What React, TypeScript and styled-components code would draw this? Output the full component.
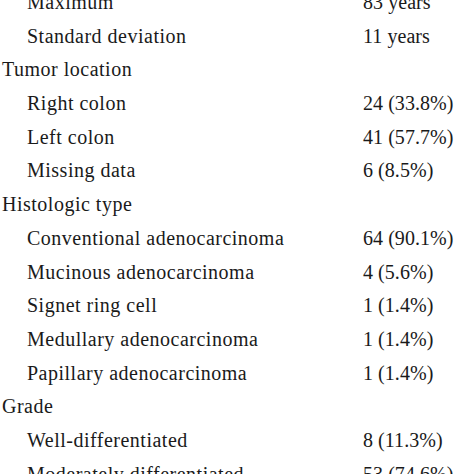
import React from 'react'
import styled, { createGlobalStyle } from 'styled-components'

const GlobalStyle = createGlobalStyle`
    html, body {
        margin: 0;
        padding: 0;
        background: #fff;
        overflow: hidden;
    }
`

type Row = { label: string; value?: string; sub?: boolean }

const rows: Row[] = [
    { label: 'Maximum', value: '83 years', sub: true },
    { label: 'Standard deviation', value: '11 years', sub: true },
    { label: 'Tumor location' },
    { label: 'Right colon', value: '24 (33.8%)', sub: true },
    { label: 'Left colon', value: '41 (57.7%)', sub: true },
    { label: 'Missing data', value: '6 (8.5%)', sub: true },
    { label: 'Histologic type' },
    { label: 'Conventional adenocarcinoma', value: '64 (90.1%)', sub: true },
    { label: 'Mucinous adenocarcinoma', value: '4 (5.6%)', sub: true },
    { label: 'Signet ring cell', value: '1 (1.4%)', sub: true },
    { label: 'Medullary adenocarcinoma', value: '1 (1.4%)', sub: true },
    { label: 'Papillary adenocarcinoma', value: '1 (1.4%)', sub: true },
    { label: 'Grade' },
    { label: 'Well-differentiated', value: '8 (11.3%)', sub: true },
    { label: 'Moderately differentiated', value: '53 (74.6%)', sub: true },
]

export default function App() {
    return (
        <>
            <GlobalStyle />
            <Table>
                {rows.map((row) => (
                    <TableRow key={row.label}>
                        <Label sub={row.sub}>{row.label}</Label>
                        <Value>{row.value}</Value>
                    </TableRow>
                ))}
            </Table>
        </>
    )
}

const Table = styled.div`
    display: flex;
    flex-direction: column;
    margin-top: -14px;
    width: 474px;
    font-family: 'Liberation Serif', 'DejaVu Serif', serif;
    font-size: 20px;
    color: #1a1a1a;
`

const TableRow = styled.div`
    display: grid;
    grid-template-columns: 363px 1fr;
    height: 33.7px;
    line-height: 33.7px;
    white-space: nowrap;
`

const Label = styled.div<{ sub?: boolean }>`
    padding-left: ${(props) => (props.sub ? '27px' : '2px')};
    letter-spacing: 0.5px;
`

const Value = styled.div`
    letter-spacing: 0.05px;
`
